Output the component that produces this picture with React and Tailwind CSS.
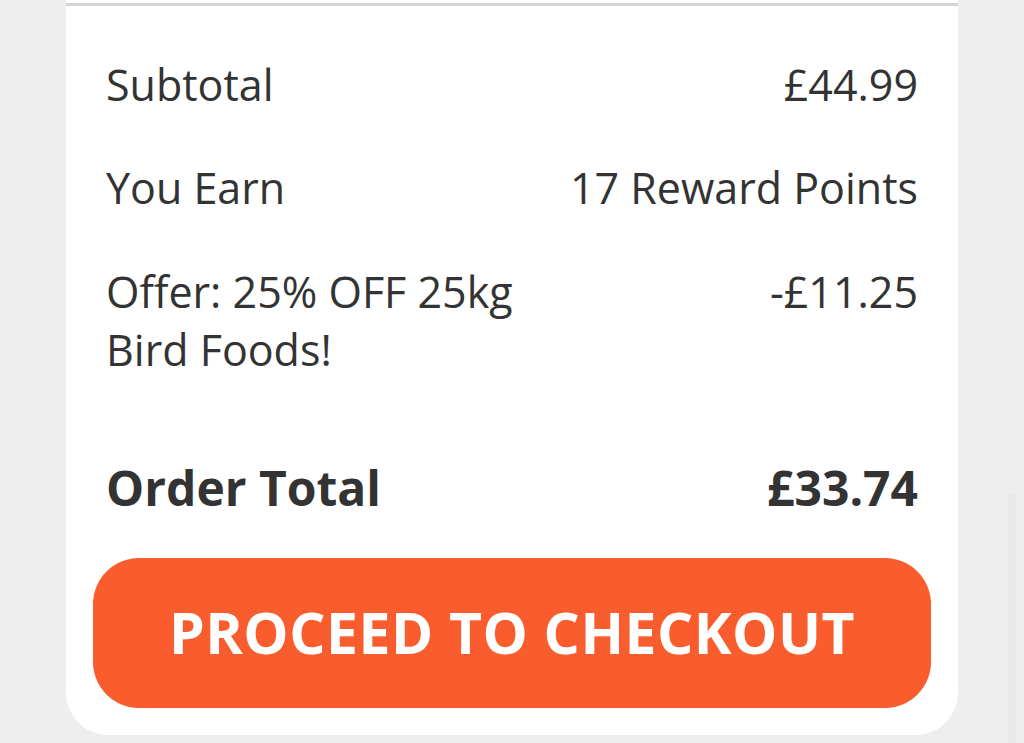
export default function App() {
  return (
    <div
      className="relative flex min-h-[743px] justify-center bg-[#eeeeee] text-[#333333]"
      style={{ fontFamily: '"Open Sans", "Liberation Sans", sans-serif' }}
    >
      <div className="h-[735px] w-[892px] rounded-b-[42px] bg-white">
        <div className="mt-[3px] h-[3px] bg-[#d5d5d5]" />
        <div className="px-[40px] pt-[50px]">
          <div className="flex justify-between text-[43px] leading-[58px]">
            <span>Subtotal</span>
            <span>£44.99</span>
          </div>
          <div className="mt-[45px] flex justify-between text-[43px] leading-[58px]">
            <span>You Earn</span>
            <span>17 Reward Points</span>
          </div>
          <div className="mt-[46px] flex justify-between text-[43px] leading-[58px]">
            <span className="max-w-[460px]">Offer: 25% OFF 25kg Bird Foods!</span>
            <span>-£11.25</span>
          </div>
          <div className="mt-[76px] flex justify-between text-[48px] font-bold leading-[65px]">
            <span>Order Total</span>
            <span>£33.74</span>
          </div>
        </div>
        <div className="px-[27px] pt-[38px]">
          <button
            type="button"
            className="flex h-[150px] w-full items-center justify-center rounded-[46px] bg-[#f95d2d] text-[57px] font-bold tracking-[0.5px] text-white"
          >
            PROCEED TO CHECKOUT
          </button>
        </div>
      </div>
      <div className="absolute right-[8px] top-[494px] h-[249px] w-[8px] bg-[#e9e9e9]" />
    </div>
  )
}
